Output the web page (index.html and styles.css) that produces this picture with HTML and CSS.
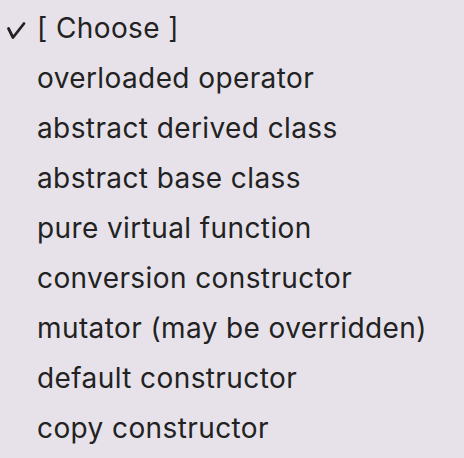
FILE: index.html
```html
<!DOCTYPE html>
<html>
<head>
<meta charset="utf-8">
<link rel="stylesheet" href="styles.css">
</head>
<body>
<ul class="menu">
  <li class="item selected"><svg class="check" viewBox="0 0 30 22" width="30" height="22"><path d="M8.5 8.5 L13 17.5 L24 3.5" fill="none" stroke="#222" stroke-width="2.8" stroke-linecap="round" stroke-linejoin="round"/></svg><span>[ Choose ]</span></li>
  <li class="item"><span>overloaded operator</span></li>
  <li class="item"><span>abstract derived class</span></li>
  <li class="item"><span>abstract base class</span></li>
  <li class="item"><span>pure virtual function</span></li>
  <li class="item"><span>conversion constructor</span></li>
  <li class="item"><span>mutator (may be overridden)</span></li>
  <li class="item"><span>default constructor</span></li>
  <li class="item"><span>copy constructor</span></li>
</ul>
</body>
</html>
```
FILE: styles.css
```css
html, body {
  margin: 0;
  padding: 0;
  background: #e7e2e9;
  width: 464px;
  height: 458px;
  overflow: hidden;
}
.menu {
  list-style: none;
  margin: 0;
  padding: 3px 0 0 0;
  font-family: Inter, "Noto Sans", sans-serif;
  font-size: 28px;
  letter-spacing: 0.4px;
  color: #222222;
}
.item {
  position: relative;
  height: 50px;
  display: flex;
  align-items: center;
  padding-left: 37px;
  white-space: nowrap;
}
.check {
  position: absolute;
  left: 0;
  top: 17px;
}
```
